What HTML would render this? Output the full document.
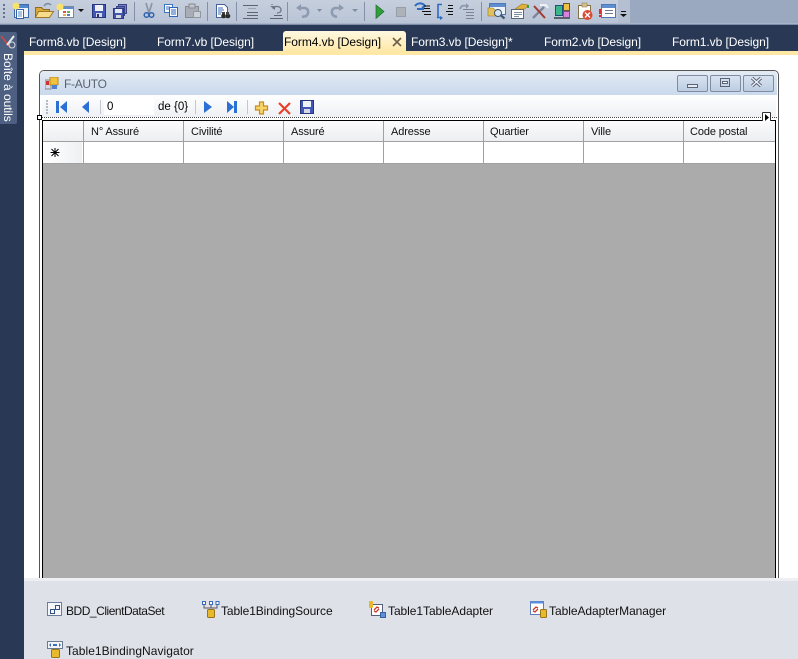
<!DOCTYPE html>
<html><head><meta charset="utf-8"><style>
html,body{margin:0;padding:0;width:798px;height:659px;overflow:hidden;background:#293955}
body{position:relative;font-family:"Liberation Sans",sans-serif;font-size:12px;color:#000}
div,span,svg{position:absolute}
.t{white-space:nowrap;line-height:14px}
.tab{color:#fff;top:35px;white-space:nowrap;line-height:14px;font-size:12px;letter-spacing:-.06px}
.h{top:125px;line-height:14px;font-size:11px;white-space:nowrap;color:#111;letter-spacing:-.12px}
.v{background:#a0a0a0;width:1px}
.tr{font-size:12px;top:604px;line-height:14px;white-space:nowrap;color:#111}
</style></head><body>
<div style="left:0;top:0;width:798px;height:25px;background:#9aa9c0"></div>
<div style="left:0;top:0;width:630px;height:23px;background:linear-gradient(#c6cfdd,#b9c4d6)"></div>
<div style="left:0;top:23px;width:798px;height:1px;background:#a9b5c8"></div>
<div style="left:0;top:24px;width:798px;height:1px;background:#7f8ea6"></div>
<svg style="left:0;top:0" width="640" height="25" viewBox="0 0 640 25">
<g fill="#66728a"><rect x="3" y="4" width="2" height="2"/><rect x="3" y="8" width="2" height="2"/><rect x="3" y="12" width="2" height="2"/><rect x="3" y="16" width="2" height="2"/></g>
<path d="M134.500 2V21M207.500 2V21M236.500 2V21M287.500 2V21M364.500 2V21M481.500 2V21" stroke="#8391a8"/>
<!-- new project -->
<rect x="14.500" y="4.500" width="14" height="13" fill="#eef3fa" stroke="#3f6aa5"/><rect x="15" y="5" width="13" height="3" fill="#4f86d0"/><rect x="16.500" y="9.500" width="7" height="9" fill="#fff" stroke="#2f62a8"/><path d="M18 12h4M18 14h4M18 16h4" stroke="#5a86c4"/><circle cx="16" cy="6" r="3.500" fill="#f9e16a"/>
<!-- open -->
<path d="M35.500 7.500h6l2 2h6v8h-14z" fill="#d9a93f" stroke="#8f6c1e"/><path d="M35.500 17.500l3-6h15l-4 6z" fill="#f7dc8b" stroke="#9c7a24"/><path d="M44 6c2-3 5-3 7-1" fill="none" stroke="#7c8aa0" stroke-width="1.500"/>
<!-- add item -->
<rect x="58.500" y="6.500" width="15" height="11" fill="#fff" stroke="#7d8795"/><rect x="59" y="7" width="14" height="2" fill="#5f8ed0"/><rect x="63" y="11" width="3" height="2" fill="#d8534a"/><rect x="67" y="11" width="3" height="2" fill="#6cb256"/><rect x="63" y="14" width="3" height="2" fill="#e5b53d"/><rect x="67" y="14" width="3" height="2" fill="#4f7fd0"/><circle cx="60" cy="7" r="3.500" fill="#f9e16a"/>
<path d="M78 9h6l-3 3z" fill="#111"/>
<!-- save -->
<rect x="92.500" y="4.500" width="13" height="13" fill="#4257b5" stroke="#27367a"/><rect x="95" y="5" width="8" height="6" fill="#eef1f8"/><rect x="96" y="13" width="6" height="4" fill="#d5d9e4"/><rect x="97" y="14" width="2" height="3" fill="#27367a"/>
<!-- save all -->
<rect x="118.500" y="4.500" width="8" height="9" fill="#7682c4" stroke="#3b4585"/><rect x="116.500" y="6.500" width="8" height="9" fill="#5b69b5" stroke="#3b4585"/><rect x="113.500" y="8.500" width="10" height="10" fill="#4455a8" stroke="#2d3a80"/><rect x="115" y="9" width="7" height="4" fill="#e3e7f4"/><rect x="116" y="15" width="5" height="3" fill="#d5d9e4"/>
<!-- cut -->
<path d="M146 3l3 10M152 3l-3 10" stroke="#8a93a2" stroke-width="1.600"/><circle cx="146.500" cy="15" r="2.300" fill="none" stroke="#2e63ae" stroke-width="1.500"/><circle cx="151.500" cy="15" r="2.300" fill="none" stroke="#2e63ae" stroke-width="1.500"/>
<!-- copy -->
<rect x="164.500" y="4.500" width="8" height="8" fill="#fff" stroke="#3f74c0"/><rect x="169.500" y="7.500" width="8" height="9" fill="#f4f8ff" stroke="#2f66bc"/><path d="M171 10h5M171 12h5M171 14h5" stroke="#2f66bc"/><path d="M166 7h4M166 9h3" stroke="#3f74c0"/>
<!-- paste -->
<rect x="185.500" y="6.500" width="13" height="11" fill="#a9aeb6" stroke="#878c95"/><rect x="189" y="4" width="6" height="4" fill="#c2c6cc" stroke="#878c95"/><rect x="193.500" y="11.500" width="7" height="6" fill="#ccd0d7" stroke="#92979f"/>
<!-- find -->
<path d="M216.500 4.500h8l3 3v10h-11z" fill="#fff" stroke="#42639a"/><path d="M218 8h5M218 10h6M218 12h4M218 14h3" stroke="#3f6cb5"/><rect x="222" y="12" width="3" height="3" fill="#444"/><circle cx="223.500" cy="16" r="2.300" fill="#2a2a2a"/><circle cx="228" cy="16" r="2.300" fill="#2a2a2a"/><rect x="226" y="12" width="3" height="3" fill="#444"/>
<!-- comment / uncomment -->
<path d="M243 5.500h15" stroke="#5c6472"/><path d="M248 8.500h8" stroke="#9aa3b1"/><path d="M247 12.500h11M247 15.500h11" stroke="#5c6472"/><path d="M243 18.500h15" stroke="#5c6472"/>
<path d="M271 4.500h2" stroke="#8a94a4"/><path d="M273 9c2-4 8-3 8 1 0 2-2 3-4 3" fill="none" stroke="#6d7788" stroke-width="1.300"/><path d="M270 6h5v4z" fill="#6d7788"/><path d="M274 15.500h8" stroke="#5c6472"/><path d="M270 18.500h13" stroke="#5c6472"/>
<!-- undo redo -->
<path d="M302 17l4-1c3-2 3-7-1-8l-5 0" fill="none" stroke="#8e9ab0" stroke-width="2.600"/><path d="M296 8l5-4v7z" fill="#8e9ab0"/><path d="M317 9h5l-2.500 3z" fill="#7f8ca2"/>
<path d="M337 17l-3-1c-3-2-3-7 1-8h5" fill="none" stroke="#8e9ab0" stroke-width="2.600"/><path d="M344 8l-5-4v7z" fill="#8e9ab0"/><path d="M352 9h6l-3 3z" fill="#7f8ca2"/>
<!-- run stop -->
<path d="M376 5l8 6.500-8 7z" fill="#2f9e3c" stroke="#1d7029" stroke-width=".7"/>
<rect x="396.500" y="7.500" width="9" height="9" fill="#adb1b8" stroke="#989ea7"/>
<!-- step -->
<path d="M415 6c3-4 8-3 10 0l-3 2" fill="none" stroke="#2d6cc2" stroke-width="2"/><path d="M424 6h6M424 8.500h6M422 11.500h9M424 14.500h7" stroke="#111"/><path d="M417 9h7" stroke="#2d6cc2" stroke-width="2"/>
<path d="M442 4.500h-4v13h4" fill="none" stroke="#2d6cc2" stroke-width="1.600"/><path d="M448 5.500h5M448 8.500h5M446 11.500h7M448 14.500h5" stroke="#111"/><path d="M440 16l3 2-3 2z" fill="#2d6cc2"/><path d="M437 17l1 1" stroke="#2d6cc2"/>
<path d="M460 9c1-3 3-4 6-3" fill="none" stroke="#8a97ab" stroke-width="1.600"/><path d="M466 3l3 3-3 3z" fill="#8a97ab"/><path d="M463 9.500h11M466 12.500h8M466 15.500h8M466 18.500h8" stroke="#7b8494"/>
<!-- class view etc -->
<rect x="489.500" y="3.500" width="16" height="11" fill="#eef3fa" stroke="#4f79b4"/><rect x="490" y="4" width="15" height="3" fill="#5f8ed0"/><path d="M488 8h5l2 2h3v6h-10z" fill="#e2c15c" stroke="#9c7a24" stroke-width=".6"/><circle cx="498" cy="13" r="3.500" fill="#d5e5f5" stroke="#3e5670"/><path d="M501 15.500l3.500 3" stroke="#3e5670" stroke-width="2.200"/>
<path d="M511.500 9.500h12v9h-12z" fill="#fff" stroke="#58657a"/><path d="M514 12.500h8M514 14.500h8M514 16.500h5" stroke="#7f8ea6"/><path d="M515 9l7-5 6 1-3 4z" fill="#e0b23c" stroke="#a37e20" stroke-width=".6"/><path d="M527 5h2v3h-2z" fill="#3d9b4c"/>
<path d="M533 18l11-11" stroke="#7d8799" stroke-width="2.500"/><path d="M534 6l11 12" stroke="#a5392f" stroke-width="2"/><path d="M540 5h6l2 3" fill="none" stroke="#eef1f5" stroke-width="2"/>
<rect x="555.500" y="5.500" width="7" height="10" fill="#3bb58a" stroke="#1e4f7a"/><rect x="563.500" y="3.500" width="6" height="7" fill="#f0c040" stroke="#5f5a30"/><rect x="563.500" y="11.500" width="6" height="6" fill="#dd7fdc" stroke="#7f4f7f"/><rect x="554" y="17" width="16" height="2" fill="#596170"/>
<rect x="578.500" y="5.500" width="12" height="13" fill="#fff" stroke="#86724a"/><rect x="582" y="3" width="5" height="4" fill="#d6c08a" stroke="#86724a" stroke-width=".5"/><circle cx="587.500" cy="15" r="5" fill="#dd4a32"/><path d="M585 12.500l5 5M590 12.500l-5 5" stroke="#fff" stroke-width="1.300"/>
<rect x="601.500" y="4.500" width="14" height="13" fill="#fff" stroke="#4f79b4"/><rect x="602" y="5" width="13" height="3" fill="#5f8ed0"/><path d="M605 10.500h8M605 13.500h8" stroke="#6c7c92"/><path d="M600 9v5" stroke="#dd2a2a" stroke-width="2"/><rect x="599" y="15" width="2" height="2" fill="#dd2a2a"/>
<rect x="618" y="0" width="12" height="23" fill="#b4c0d2"/><path d="M621 11.500h5" stroke="#111"/><path d="M620 14h7l-3.500 3z" fill="#111"/>
</svg>

<div style="left:0;top:25px;width:798px;height:6px;background:#293955"></div>
<div style="left:283px;top:31px;width:123px;height:21px;background:linear-gradient(#fff8e1,#ffe8a6);border-radius:3px 3px 0 0"></div>
<div style="left:24px;top:51px;width:774px;height:4px;background:#ffe8a6"></div>
<div class="tab" style="left:29px">Form8.vb [Design]</div>
<div class="tab" style="left:157px">Form7.vb [Design]</div>
<div class="tab" style="left:284px;color:#000">Form4.vb [Design]</div>
<svg style="left:391px;top:36px" width="12" height="12"><path d="M2 2l8 8M10 2l-8 8" stroke="#6b6048" stroke-width="1.600"/></svg>
<div class="tab" style="left:411px">Form3.vb [Design]*</div>
<div class="tab" style="left:544px">Form2.vb [Design]</div>
<div class="tab" style="left:672px">Form1.vb [Design]</div>

<div style="left:0;top:32px;width:17px;height:92px;background:#4d6082;border-radius:0 2px 2px 0"></div>
<svg style="left:0;top:33px" width="17" height="18"><path d="M1 3l9 11" stroke="#d8443a" stroke-width="1.500"/><path d="M14 3l-7 9" stroke="#e6e9ee" stroke-width="2"/><circle cx="12" cy="12" r="3" fill="none" stroke="#d5d9e0"/></svg>
<div style="left:1px;top:53px;width:14px;height:70px;color:#fff;font-size:12px;line-height:14px;writing-mode:vertical-rl;white-space:nowrap;letter-spacing:-.05px">Boîte à outils</div>

<div style="left:24px;top:55px;width:774px;height:524px;background:#fff"></div>

<div style="left:39px;top:70px;width:738px;height:509px;border:1px solid #555;border-bottom:0;border-radius:5px 5px 0 0;background:#fff"></div>
<div style="left:40px;top:71px;width:737px;height:24px;background:linear-gradient(#e4ebf4,#c9d9ec);border-radius:4px 4px 0 0"></div>
<svg style="left:45px;top:77px" width="14" height="14"><rect x="0" y="3" width="6" height="9" fill="#d9dde3" stroke="#888"/><rect x="1" y="4" width="3" height="4" fill="#c33"/><rect x="5" y="0" width="8" height="8" fill="#f2c23e" stroke="#b68a1e"/><rect x="7" y="8" width="5" height="4" fill="#4f7fd0"/></svg>
<div class="t" style="left:64px;top:77px;color:#5c6470;font-size:12px;letter-spacing:-.3px">F-AUTO</div>
<div style="left:677px;top:75px;width:29px;height:15px;border:1px solid #7e8ba0;border-radius:2px;background:linear-gradient(#d9e3f0,#bccde2)"></div>
<div style="left:710px;top:75px;width:29px;height:15px;border:1px solid #7e8ba0;border-radius:2px;background:linear-gradient(#d9e3f0,#bccde2)"></div>
<div style="left:743px;top:75px;width:29px;height:15px;border:1px solid #7e8ba0;border-radius:2px;background:linear-gradient(#d9e3f0,#bccde2)"></div>
<svg style="left:677px;top:75px" width="96" height="17"><rect x="10.500" y="9.500" width="10" height="3" fill="#e6eaf0" stroke="#596478"/><rect x="43.500" y="3.500" width="9" height="8" fill="none" stroke="#596478"/><rect x="45.500" y="6.500" width="5" height="2" fill="#fff" stroke="#596478"/><path d="M75 3l9 8M84 3l-9 8" stroke="#596478" stroke-width="3.200"/><path d="M75 3l9 8M84 3l-9 8" stroke="#f4f6fa" stroke-width="1.200"/></svg>

<div style="left:42px;top:95px;width:734px;height:22px;background:linear-gradient(#fff,#eef0f4)"></div>
<svg style="left:44px;top:96px" width="280" height="22">
<g fill="#b4bac4"><rect x="2" y="4" width="2" height="2"/><rect x="2" y="7" width="2" height="2"/><rect x="2" y="10" width="2" height="2"/><rect x="2" y="13" width="2" height="2"/><rect x="2" y="16" width="2" height="2"/></g>
<path d="M12 5h3v12h-3z" fill="#2b70d4"/><path d="M23 5l-7 6 7 6z" fill="#2b70d4"/>
<path d="M45 5l-7 6 7 6z" fill="#2b70d4"/>
<path d="M56.500 4V18M151.500 4V18M203.500 4V18" stroke="#c3c8d0"/>
<path d="M160 5l8 6-8 6z" fill="#2b70d4"/>
<path d="M183 5l7 6-7 6z" fill="#2b70d4"/><path d="M190 5h3v12h-3z" fill="#2b70d4"/>
<path d="M215.500 6.500h4v4h4v4h-4v4h-4v-4h-4v-4h4z" fill="#f7d56a" stroke="#c68d1e" stroke-width="1.200" transform="translate(0 -.5)"/>
<path d="M235 7l11 11M246 7l-11 11" stroke="#e8402c" stroke-width="2.200"/>
<rect x="256.500" y="4.500" width="13" height="13" fill="#4257b5" stroke="#27367a"/><rect x="259" y="5" width="8" height="6" fill="#eef1f8"/><rect x="260" y="13" width="6" height="4" fill="#d5d9e4"/>
</svg>
<div style="left:104px;top:97px;width:50px;height:18px;background:#fff"></div>
<div class="t" style="left:107px;top:100px;font-size:11.500px">0</div>
<div class="t" style="left:158px;top:100px;font-size:11.500px">de {0}</div>

<div style="left:40px;top:117px;width:737px;height:0;border-top:1px dotted #444"></div>
<div style="left:42px;top:120px;width:1px;height:459px;background:#000"></div>
<div style="left:775px;top:120px;width:1px;height:459px;background:#000"></div>
<div style="left:42px;top:120px;width:734px;height:1px;background:#000"></div>
<div style="left:37px;top:115px;width:3px;height:3px;border:1px solid #000;background:#fff"></div>
<div style="left:762px;top:112px;width:7px;height:8px;border:1px solid #333;background:#fff;border-radius:1px"></div>
<svg style="left:765px;top:114px" width="5" height="7"><path d="M0 0l4 3.500L0 7z" fill="#000"/></svg>

<div style="left:43px;top:121px;width:732px;height:20px;background:linear-gradient(#fbfbfc,#eceef1)"></div>
<div style="left:43px;top:141px;width:732px;height:1px;background:#a0a0a0"></div>
<div style="left:43px;top:142px;width:732px;height:21px;background:#fff"></div>
<div style="left:44px;top:142px;width:38px;height:21px;background:linear-gradient(90deg,#fff,#eef0f3)"></div>
<div style="left:43px;top:163px;width:732px;height:1px;background:#a0a0a0"></div>
<div class="v" style="left:83px;top:121px;height:42px"></div>
<div class="v" style="left:183px;top:121px;height:42px"></div>
<div class="v" style="left:283px;top:121px;height:42px"></div>
<div class="v" style="left:383px;top:121px;height:42px"></div>
<div class="v" style="left:483px;top:121px;height:42px"></div>
<div class="v" style="left:583px;top:121px;height:42px"></div>
<div class="v" style="left:683px;top:121px;height:42px"></div>
<div class="h" style="left:91px">N° Assuré</div>
<div class="h" style="left:191px">Civilité</div>
<div class="h" style="left:291px">Assuré</div>
<div class="h" style="left:391px">Adresse</div>
<div class="h" style="left:490px">Quartier</div>
<div class="h" style="left:591px">Ville</div>
<div class="h" style="left:690px">Code postal</div>
<svg style="left:50px;top:148px" width="10" height="10"><path d="M5 0v9M.5 4.500h9M1.500 1l7 7M8.500 1l-7 7" stroke="#000" stroke-width="1"/></svg>
<div style="left:43px;top:164px;width:732px;height:415px;background:#ababab"></div>

<div style="left:24px;top:578px;width:774px;height:3px;background:#eeeff2"></div>
<div style="left:24px;top:581px;width:774px;height:78px;background:#dee1e8"></div>
<svg style="left:47px;top:602px" width="16" height="15"><rect x=".5" y=".5" width="14" height="13" fill="#f4f6fa" stroke="#6c7d9c"/><rect x="3.500" y="7.500" width="4" height="4" fill="none" stroke="#34507f"/><rect x="8.500" y="3.500" width="4" height="4" fill="none" stroke="#34507f"/></svg>
<div class="tr" style="left:66px;letter-spacing:-.47px">BDD_ClientDataSet</div>
<svg style="left:202px;top:601px" width="18" height="17"><g fill="#fff" stroke="#3a6cc0"><rect x=".5" y=".5" width="3" height="3"/><rect x="7.500" y=".5" width="3" height="3"/><rect x="14" y=".5" width="3" height="3"/></g><path d="M2 4v3h13V4M9 4v3" fill="none" stroke="#556"/><rect x="5.500" y="8.500" width="7" height="8" rx="1" fill="#e8b92c" stroke="#97751a"/></svg>
<div class="tr" style="left:221px;letter-spacing:-.1px">Table1BindingSource</div>
<svg style="left:369px;top:601px" width="17" height="17"><rect x="2.500" y="3.500" width="11" height="11" fill="#fff" stroke="#54607a"/><rect x="0" y="0" width="4" height="7" rx="1" fill="#e8b92c"/><path d="M5 9l3-3 2 1M10 8l-3 3-2-1" fill="none" stroke="#c93a2a" stroke-width="1.300"/><rect x="11.500" y="11.500" width="5" height="5" fill="#5c8fdc" stroke="#3a5f9c"/></svg>
<div class="tr" style="left:388px;letter-spacing:-.06px">Table1TableAdapter</div>
<svg style="left:530px;top:601px" width="17" height="17"><rect x=".5" y=".5" width="13" height="13" fill="#fff" stroke="#5b7eb8"/><rect x=".5" y=".5" width="13" height="2" fill="#5b8ee0"/><path d="M3 9l3-3 2 1M8 8l-3 3-2-1" fill="none" stroke="#c93a2a" stroke-width="1.300"/><rect x="10.500" y="8.500" width="6" height="8" rx="1" fill="#e8b92c" stroke="#97751a"/></svg>
<div class="tr" style="left:549px;letter-spacing:-.05px">TableAdapterManager</div>
<svg style="left:47px;top:641px" width="17" height="17"><rect x=".5" y=".5" width="15" height="7" fill="#f2f4f8" stroke="#6c7a90"/><path d="M2 4l2-2v4zM14 4l-2-2v4z" fill="#3a6cc0"/><rect x="6" y="3" width="4" height="2" fill="#3a6cc0"/><rect x="4.500" y="8.500" width="8" height="8" rx="1" fill="#e8b92c" stroke="#97751a"/></svg>
<div class="tr" style="left:66px;top:644px;letter-spacing:.05px">Table1BindingNavigator</div>
</body></html>
